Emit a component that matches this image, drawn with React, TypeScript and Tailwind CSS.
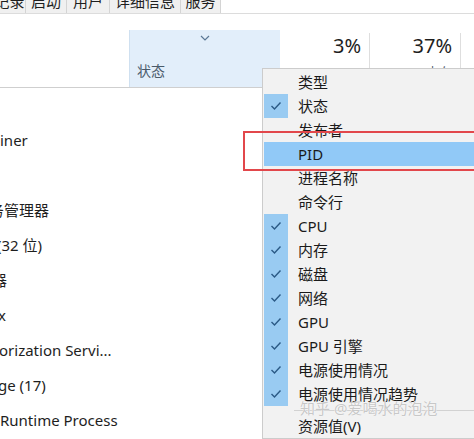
import React from "react";

const font = { fontFamily: "'Noto Sans', 'Noto Sans CJK SC', sans-serif" };

const items: { label: string; checked: boolean; active?: boolean }[] = [
  { label: "类型", checked: false },
  { label: "状态", checked: true },
  { label: "发布者", checked: false },
  { label: "PID", checked: false, active: true },
  { label: "进程名称", checked: false },
  { label: "命令行", checked: false },
  { label: "CPU", checked: true },
  { label: "内存", checked: true },
  { label: "磁盘", checked: true },
  { label: "网络", checked: true },
  { label: "GPU", checked: true },
  { label: "GPU 引擎", checked: true },
  { label: "电源使用情况", checked: true },
  { label: "电源使用情况趋势", checked: true },
];

const rows: { text: string; ml: string }[] = [
  { text: "iner", ml: "ml-[0px]" },
  { text: "", ml: "ml-[0px]" },
  { text: "务管理器", ml: "-ml-[11px]" },
  { text: "(32 位)", ml: "-ml-[3px]" },
  { text: "器", ml: "-ml-[8px]" },
  { text: "x", ml: "-ml-[2px]" },
  { text: "orization Servi...", ml: "-ml-[1px]" },
  { text: "ge (17)", ml: "-ml-[2px]" },
  { text: "Runtime Process", ml: "ml-[0px]" },
];

function Check() {
  return (
    <svg width="12" height="10" viewBox="0 0 12 10" fill="none">
      <path d="M1.5 5 L4.5 8 L10.5 1.5" stroke="#2b5a86" strokeWidth="1.4" />
    </svg>
  );
}

export default function App() {
  return (
    <div className="relative w-[474px] h-[439px] overflow-hidden bg-white text-[#1e1e1e]" style={font}>
      {/* tab bar */}
      <div className="flex h-[14px] overflow-hidden border-b border-[#dcdcdc]">
        {[
          { t: "记录", w: "w-[26px]", ml: "-ml-[6px]" },
          { t: "启动", w: "w-[41px]", ml: "" },
          { t: "用户", w: "w-[43px]", ml: "" },
          { t: "详细信息", w: "w-[71px]", ml: "" },
          { t: "服务", w: "w-[40px]", ml: "" },
        ].map((tab, i) => (
          <div
            key={i}
            className={`${tab.w} shrink-0 flex justify-center bg-[#f0f0f0] border-r border-[#d4d4d4] text-[15px] leading-[20px] -mt-[9px] overflow-hidden`}
          >
            <span className={tab.ml}>{tab.t}</span>
          </div>
        ))}
      </div>

      {/* header */}
      <div className="flex h-[74px] pt-[16px] border-b border-[#cfcfcf]">
        <div className="w-[129px] shrink-0" />
        <div className="w-[151px] shrink-0 bg-[#e2eefa] border-l border-[#cfe0f0] flex flex-col items-center">
          <svg width="10" height="6" viewBox="0 0 10 6" className="mt-[5px]">
            <path d="M1 1 L5 5 L9 1" stroke="#5b7895" strokeWidth="1.2" fill="none" />
          </svg>
          <div className="self-start pl-[7px] mt-[19px] text-[14px] text-[#4a5a6a]">状态</div>
        </div>
        <div className="w-[90px] shrink-0 flex flex-col items-end pr-[8px] border-r border-[#dedede] mt-[3px]">
          <div className="text-[20px] leading-[26px]">3%</div>
          <div className="text-[13px] text-[#4a5a6a] mt-[4px]">CPU</div>
        </div>
        <div className="w-[91px] shrink-0 flex flex-col items-end pr-[8px] border-r border-[#dedede] mt-[3px]">
          <div className="text-[20px] leading-[26px]">37%</div>
          <div className="text-[13px] text-[#4a5a6a] mt-[4px]">内存</div>
        </div>
      </div>

      {/* rows */}
      <div className="flex flex-col pt-[35px]">
        {rows.map((r, i) => (
          <div key={i} className="h-[35px] flex items-center text-[15px] whitespace-nowrap overflow-hidden">
            <span className={r.ml}>{r.text}</span>
          </div>
        ))}
      </div>

      {/* context menu */}
      <div className="absolute left-[262px] top-[68px] w-[230px] bg-[#f2f2f2] border border-[#cccccc] pt-[1px] pl-[1px] text-[15px] text-[#1a1a1a]">
        {items.map((it, i) => (
          <div key={i} className={`flex h-[24px] items-center ${it.active ? "bg-[#91c9f7]" : ""}`}>
            <div className={`w-[24px] h-[24px] shrink-0 flex items-center justify-center ${it.checked ? "bg-[#99cbf2]" : ""}`}>
              {it.checked ? <Check /> : null}
            </div>
            <div className="ml-[10px] leading-[24px]">{it.label}</div>
          </div>
        ))}
        <div className="h-[8px] flex items-center">
          <div className="ml-[30px] flex-1 h-px bg-[#d2d2d2]" />
        </div>
        <div className="flex h-[24px] items-center">
          <div className="w-[24px] shrink-0" />
          <div className="ml-[10px] leading-[24px]">资源值(V)</div>
          <svg width="6" height="10" viewBox="0 0 6 10" className="ml-[114px]">
            <path d="M1 1 L5 5 L1 9" stroke="#333" strokeWidth="1.2" fill="none" />
          </svg>
        </div>
      </div>

      {/* annotation */}
      <div className="absolute left-[243px] top-[131px] w-[260px] h-[40px] border-2 border-[#e2474b]" />

      {/* watermark */}
      <div className="absolute left-[300px] top-[397px] text-[15px] text-[#c8c8c8] whitespace-nowrap" style={{ textShadow: "0 0 1px #fff, 0 0 1px #fff" }}>
        知乎 @爱喝水的泡泡
      </div>
    </div>
  );
}
